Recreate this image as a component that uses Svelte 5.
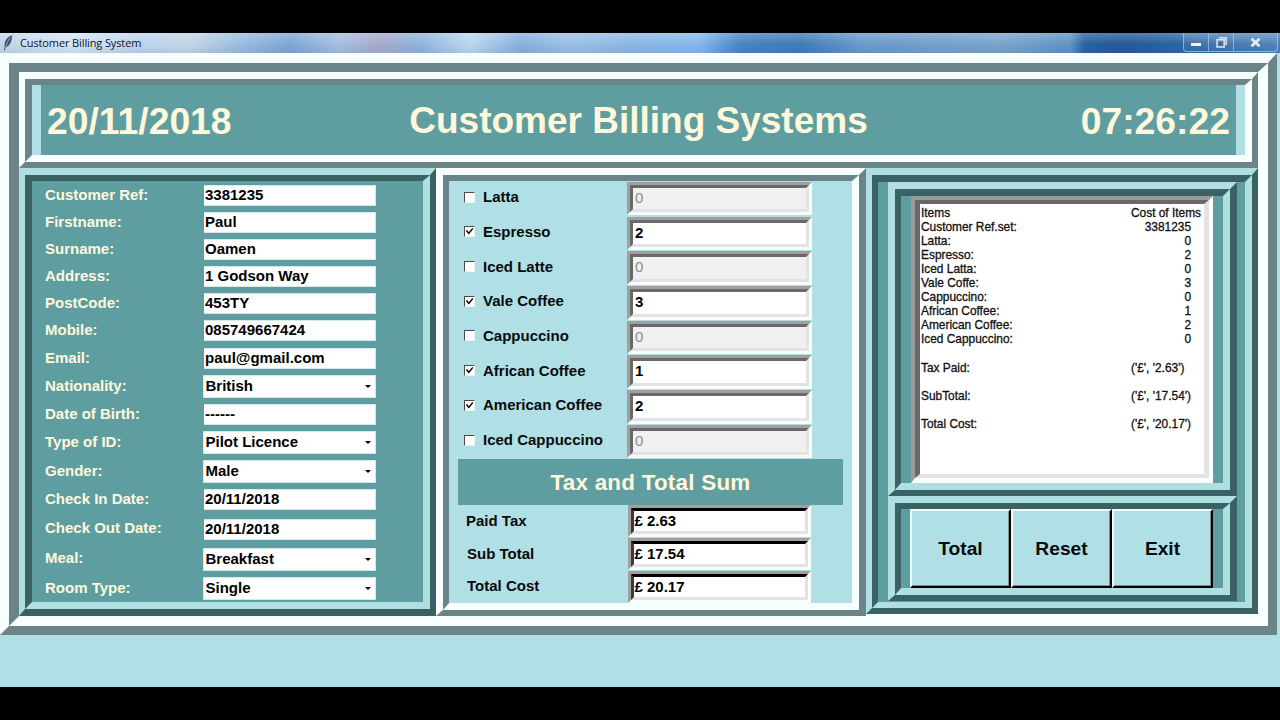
<script>
  const customer = [
    { label: 'Customer Ref:', value: '3381235', h: 27 },
    { label: 'Firstname:', value: 'Paul', h: 27 },
    { label: 'Surname:', value: 'Oamen', h: 27 },
    { label: 'Address:', value: '1 Godson Way', h: 27 },
    { label: 'PostCode:', value: '453TY', h: 27 },
    { label: 'Mobile:', value: '085749667424', h: 27 },
    { label: 'Email:', value: 'paul@gmail.com', h: 29 },
    { label: 'Nationality:', value: 'British', combo: true, h: 27 },
    { label: 'Date of Birth:', value: '------', h: 29 },
    { label: 'Type of ID:', value: 'Pilot Licence', combo: true, h: 27 },
    { label: 'Gender:', value: 'Male', combo: true, h: 31 },
    { label: 'Check In Date:', value: '20/11/2018', h: 25 },
    { label: 'Check Out Date:', value: '20/11/2018', h: 34 },
    { label: 'Meal:', value: 'Breakfast', combo: true, h: 26 },
    { label: 'Room Type:', value: 'Single', combo: true, h: 33 }
  ];
  const rowTemplate = customer.map((c) => c.h + 'px').join(' ');

  const drinks = [
    { name: 'Latta', qty: '0', on: false },
    { name: 'Espresso', qty: '2', on: true },
    { name: 'Iced Latte', qty: '0', on: false },
    { name: 'Vale Coffee', qty: '3', on: true },
    { name: 'Cappuccino', qty: '0', on: false },
    { name: 'African Coffee', qty: '1', on: true },
    { name: 'American Coffee', qty: '2', on: true },
    { name: 'Iced Cappuccino', qty: '0', on: false }
  ];

  const totals = [
    { name: 'Paid Tax', value: '£ 2.63', nudge: false },
    { name: 'Sub Total', value: '£ 17.54', nudge: true },
    { name: 'Total Cost', value: '£ 20.17', nudge: true }
  ];

  const receipt = [
    ['Customer Ref.set:', '3381235'],
    ['Latta:', '0'],
    ['Espresso:', '2'],
    ['Iced Latta:', '0'],
    ['Vale Coffe:', '3'],
    ['Cappuccino:', '0'],
    ['African Coffee:', '1'],
    ['American Coffee:', '2'],
    ['Iced Cappuccino:', '0']
  ];
  const receiptCosts = [
    ['Tax Paid:', "('£', '2.63')"],
    ['SubTotal:', "('£', '17.54')"],
    ['Total Cost:', "('£', '20.17')"]
  ];
</script>

<div class="bar"></div>

<header class="titlebar">
  <svg class="feather" viewBox="0 0 10 16" width="10" height="16" aria-hidden="true">
    <path d="M9 .4C5.6 1 2.8 4 1.8 7.8c-.4 1.5-.4 2.8 0 3.900L.9 15.400l.9.2.9-3.500c2.600-.6 4.600-3.200 5.500-6.200.6-2 1-3.900.8-5.500z" fill="#3d5068" />
    <path d="M7.400 2.400C5.400 4.600 3.800 8 3 11.400" fill="none" stroke="#b4c6d8" stroke-width=".8" />
  </svg>
  <span class="wintitle">Customer Billing System</span>
  <div class="winbtns">
    <div class="winbtn min">
      <span class="minglyph"></span>
    </div>
    <div class="winbtn restore">
      <svg viewBox="0 0 11 11" width="11" height="11" aria-hidden="true">
        <path d="M3 .8h7.200V8M1 2.800h7.200V10H1z" fill="none" stroke="#dfe7f0" stroke-width="1.500" />
        <path d="M3.200 5h3v3h-3z" fill="#456a90" />
      </svg>
    </div>
    <div class="winbtn close">
      <svg viewBox="0 0 11 9" width="11" height="9" aria-hidden="true">
        <path d="M1.500 .8 9.500 8.200M9.500 .8 1.500 8.200" fill="none" stroke="#e4eaf1" stroke-width="2.800" />
      </svg>
    </div>
  </div>
</header>

<main class="window">
  <div class="o1">
    <div class="o2">
      <div class="h1">
        <div class="h2">
          <div class="heading">
            <span class="hdate">20/11/2018</span>
            <span class="htitle">Customer Billing Systems</span>
            <span class="htime">07:26:22</span>
          </div>
        </div>
      </div>

      <div class="columns">
        <section class="left1">
          <div class="left2">
            <div class="form" style="grid-template-rows: {rowTemplate}">
              {#each customer as c}
                <div class="flabel">{c.label}</div>
                {#if c.combo}
                  <div class="combo">
                    <span>{c.value}</span>
                    <i class="arrow"></i>
                  </div>
                {:else}
                  <div class="entry">{c.value}</div>
                {/if}
              {/each}
            </div>
          </div>
        </section>

        <section class="mid1">
          <div class="mid2">
            <div class="drinks">
              {#each drinks as d}
                <div class="drink">
                  <span class="check">
                    {#if d.on}
                      <svg viewBox="0 0 9 9" width="9" height="9" aria-hidden="true">
                        <path d="M1.500 3.500 3.800 6.400 7.800 1.400" fill="none" stroke="#000" stroke-width="1.500" />
                      </svg>
                    {/if}
                  </span>
                  <span class="dname">{d.name}</span>
                  <div class="sunk qty">
                    <div class="sunk-in" class:off={!d.on}>{d.qty}</div>
                  </div>
                </div>
              {/each}
            </div>
            <div class="banner">Tax and Total Sum</div>
            <div class="totals">
              {#each totals as t}
                <div class="total">
                  <span class="tname" class:nudge={t.nudge}>{t.name}</span>
                  <div class="sunk tot">
                    <div class="sunk-in strong">{t.value}</div>
                  </div>
                </div>
              {/each}
            </div>
          </div>
        </section>

        <section class="right1">
          <div class="right2">
            <div class="inner1">
              <div class="inner1b">
                <div class="rec1">
                  <div class="rec2">
                    <div class="rline"><span>Items</span><span>Cost of Items</span></div>
                    {#each receipt as r}
                      <div class="rline"><span>{r[0]}</span><span class="rval">{r[1]}</span></div>
                    {/each}
                    {#each receiptCosts as r}
                      <div class="rline spaced"><span>{r[0]}</span><span>{r[1]}</span></div>
                    {/each}
                  </div>
                </div>
              </div>
            </div>
            <div class="inner2">
              <div class="inner2b">
                <button class="btn">Total</button>
                <button class="btn">Reset</button>
                <button class="btn">Exit</button>
              </div>
            </div>
          </div>
        </section>
      </div>
    </div>
  </div>
</main>

<div class="bar bottom"></div>

<style>
  :global(body) {
    margin: 0;
    background: #000;
    font-family: "Liberation Sans", Arial, sans-serif;
  }

  .bar { height: 33px; background: #000; }
  .bar.bottom { height: 33px; }

  .titlebar {
    height: 20px;
    display: flex;
    align-items: center;
    position: relative;
    background:
      linear-gradient(180deg, rgba(255,255,255,.22), rgba(255,255,255,0) 55%, rgba(20,50,90,.08)),
      linear-gradient(90deg, #c2d5e8 0, #d4e4f4 70px, #bcd4ee 140px, #c3d5e6 190px, #9bbde0 240px, #7ea6d4 290px, #a6bfe0 340px, #a9a9cc 380px, #8fb4dc 420px, #bcd8f0 470px, #88b0dc 520px, #9cc0e4 570px, #8ab6e4 640px, #84b8ec 700px, #4a84c4 740px, #3f7cb8 800px, #6a9aca 860px, #7aa4cc 1000px, #5f94c4 1070px, #2a639f 1085px, #23599a 1120px, #2f68a4 1190px, #4a7eb4 1280px);
  }
  .feather { margin-left: 3px; flex: none; }
  .wintitle {
    margin-left: 7px;
    font: 11px/20px "Open Sans", "Noto Sans", sans-serif;
    letter-spacing: -.12px;
    color: #10151c;
  }
  .winbtns {
    position: absolute;
    left: 1183px;
    top: 0;
    width: 95px;
    height: 19px;
    display: flex;
    box-sizing: border-box;
    border: 1px solid rgba(190,215,240,.65);
    border-top: 0;
    border-radius: 0 0 4px 4px;
  }
  .winbtn {
    display: flex;
    align-items: center;
    justify-content: center;
    box-sizing: border-box;
    background: linear-gradient(180deg, rgba(255,255,255,.14), rgba(255,255,255,.02));
  }
  .winbtn.min { width: 25px; border-right: 1px solid rgba(190,215,240,.6); }
  .winbtn.restore { width: 25px; border-right: 1px solid rgba(190,215,240,.6); }
  .winbtn.close { flex: 1; }
  .minglyph { width: 10px; height: 3px; margin-top: 5px; background: #eef3f8; }

  .window { height: 634px; background: #b0e0e6; }

  /* Outer ridge of the window */
  .o1 {
    box-sizing: border-box;
    width: 1277px;
    height: 582px;
    border-style: solid;
    border-width: 10px 9px 9px 9px;
    border-color: #f7ffff #6b8487 #6b8487 #f7ffff;
  }
  .o2 {
    box-sizing: border-box;
    height: 100%;
    border-style: solid;
    border-width: 9px 10px 10px 10px;
    border-color: #6b8487 #f7ffff #f7ffff #6b8487;
    background: #f7ffff;
  }

  /* Heading */
  .h1 {
    box-sizing: border-box;
    height: 96px;
    border-style: solid;
    border-width: 7px 6px 6px 6px;
    border-color: #f7ffff #6b8487 #6b8487 #f7ffff;
  }
  .h2 {
    box-sizing: border-box;
    height: 100%;
    border-style: solid;
    border-width: 6px 7px 7px 7px;
    border-color: #6b8487 #f7ffff #f7ffff #6b8487;
    background: #b0e0e6;
  }
  .heading {
    box-sizing: border-box;
    height: 100%;
    margin: 0 9px;
    padding: 2px 6px 0;
    background: #5f9ea0;
    display: grid;
    grid-template-columns: 1fr auto 1fr;
    align-items: center;
    color: #fff8dc;
    font-size: 37.3px;
    font-weight: 700;
    line-height: 68px;
  }
  .htitle { font-size: 37px; }
  .htime { text-align: right; }

  .columns { display: flex; height: 448px; }

  /* Customer column */
  .left1 {
    box-sizing: border-box;
    width: 417px;
    height: 448px;
    border-style: solid;
    border-width: 7px 6px 7px 6px;
    border-color: #afdfe1 #3a6163 #3a6163 #afdfe1;
  }
  .left2 {
    box-sizing: border-box;
    height: 100%;
    border-style: solid;
    border-width: 6px 7px 7px 7px;
    border-color: #3a6163 #afdfe1 #afdfe1 #3a6163;
    background: #5f9ea0;
    padding: 1px 0 0 13px;
  }
  .form {
    display: grid;
    grid-template-columns: 157.5px 173.5px;
    align-items: center;
  }
  .flabel {
    color: #fff8dc;
    font-size: 15px;
    font-weight: 700;
    line-height: 18px;
    margin-top: -2px;
  }
  .entry {
    box-sizing: border-box;
    height: 21px;
    margin-left: 1.5px;
    padding-left: 1px;
    background: #fff;
    border: 1px solid #d2eaec;
    border-left: 0;
    color: #000;
    font-size: 15px;
    font-weight: 700;
    line-height: 17px;
    white-space: nowrap;
  }
  .combo {
    box-sizing: border-box;
    height: 23px;
    padding: 0 4px 2px 2px;
    background: #fff;
    border: 1px solid #cfe9ec;
    color: #000;
    font-size: 15px;
    font-weight: 700;
    line-height: 19px;
    display: flex;
    justify-content: space-between;
    align-items: center;
  }
  .arrow {
    width: 0;
    height: 0;
    margin-top: 2px;
    border-left: 3px solid transparent;
    border-right: 3px solid transparent;
    border-top: 3px solid #000;
  }

  /* Drinks column */
  .mid1 {
    box-sizing: border-box;
    width: 430px;
    height: 448px;
    border-style: solid;
    border-width: 7px 7px 6px 7px;
    border-color: #f7ffff #6b8487 #6b8487 #f7ffff;
  }
  .mid2 {
    box-sizing: border-box;
    height: 100%;
    border-style: solid;
    border-width: 6px 7px 7px 6px;
    border-color: #6b8487 #f7ffff #f7ffff #6b8487;
    background: #b0e0e6;
    padding-top: .4px;
  }
  .drink {
    height: 34.7px;
    display: flex;
    align-items: center;
    padding-left: 15px;
  }
  .check {
    box-sizing: border-box;
    flex: none;
    width: 11px;
    height: 11px;
    margin-bottom: 3px;
    background: #fff;
    border-style: solid;
    border-width: 1px;
    border-color: #4a4a4a #f2f2f2 #f2f2f2 #4a4a4a;
    display: flex;
    align-items: center;
    justify-content: center;
    overflow: hidden;
  }
  .dname {
    margin-left: 8px;
    margin-bottom: 4px;
    width: 144px;
    color: #0a0a0a;
    font-size: 15px;
    font-weight: 700;
    white-space: nowrap;
  }
  .sunk {
    box-sizing: border-box;
    border-style: solid;
    border-width: 3px;
    border-color: #a0a0a0 #fafdfd #fafdfd #a0a0a0;
  }
  .sunk.qty { width: 185px; height: 33.5px; }
  .sunk.tot { width: 183.5px; height: 31.7px; margin-left: .5px; }
  .sunk-in {
    box-sizing: border-box;
    height: 100%;
    padding-left: 2px;
    border-style: solid;
    border-width: 3px;
    border-color: #696969 #e3e3e3 #e3e3e3 #696969;
    background: #fff;
    color: #000;
    font-size: 15px;
    font-weight: 700;
    line-height: 19px;
  }
  .sunk-in.off {
    background: #f0f0f0;
    color: #8c8c8c;
    font-weight: 400;
  }
  .sunk-in.strong { border-top-color: #000; border-left-color: #3a3a3a; line-height: 20px; padding-left: 1px; }
  .banner {
    margin-left: 9px;
    width: 385px;
    height: 46px;
    background: #5f9ea0;
    color: #fff8dc;
    font-size: 22.4px;
    letter-spacing: .25px;
    font-weight: 700;
    line-height: 48px;
    text-align: center;
  }
  .total {
    height: 32.8px;
    display: flex;
    align-items: center;
    padding-left: 17px;
  }
  .tname {
    width: 161px;
    margin-bottom: 2px;
    color: #0a0a0a;
    font-size: 15px;
    font-weight: 700;
  }
  .tname.nudge { margin-left: 1px; width: 160px; }

  /* Receipt column */
  .right1 {
    box-sizing: border-box;
    width: 392px;
    height: 446px;
    border-style: solid;
    border-width: 7px 6px 6px 6px;
    border-color: #afdfe1 #3a6163 #3a6163 #afdfe1;
  }
  .right2 {
    box-sizing: border-box;
    height: 100%;
    border-style: solid;
    border-width: 7px 7px 6px 6px;
    border-color: #3a6163 #afdfe1 #afdfe1 #3a6163;
    background: #5f9ea0;
    padding: 0 8px 0 10px;
  }
  .inner1, .inner2 {
    box-sizing: border-box;
    border-style: solid;
    border-width: 7px 7px 6px 7px;
    border-color: #afdfe1 #3a6163 #3a6163 #afdfe1;
  }
  .inner1 { height: 314px; }
  .inner2 { height: 105px; }
  .inner1b, .inner2b {
    box-sizing: border-box;
    height: 100%;
    border-style: solid;
    border-width: 7px 7px 7px 6px;
    border-color: #3a6163 #afdfe1 #afdfe1 #3a6163;
    background: #5f9ea0;
    padding: 0 10px;
  }
  .inner2b {
    border-width: 6px 7px 7px 6px;
    padding: 0 10px 0 9px;
    display: flex;
  }
  .rec1 {
    box-sizing: border-box;
    height: 100%;
    border-style: solid;
    border-width: 4px 4px 5px 4px;
    border-color: #9a9a9a #fbffff #fbffff #9a9a9a;
  }
  .rec2 {
    box-sizing: border-box;
    height: 100%;
    border-style: solid;
    border-width: 4px 5px 4px 5px;
    border-color: #696969 #e3e3e3 #e3e3e3 #696969;
    background: #fff;
    padding: 2px 0 0 1px;
    color: #111;
    font-size: 11.9px;
    line-height: 14.05px;
  }
  .rline {
    display: grid;
    grid-template-columns: 210px 70px;
    white-space: nowrap;
    -webkit-text-stroke: .3px #111;
  }
  .rval { text-align: right; padding-right: 10px; }
  .rline.spaced { margin-top: 14.05px; }
  .btn {
    flex: 1;
    min-width: 0;
    padding: 0;
    background: #b0e0e6;
    border-style: solid;
    border-width: 2px;
    border-color: #eefafb #000 #000 #eefafb;
    box-shadow: inset -1px -1px 0 #7c8e90;
    color: #0a0a0a;
    font-family: inherit;
    font-size: 19.2px;
    font-weight: 700;
  }
</style>
